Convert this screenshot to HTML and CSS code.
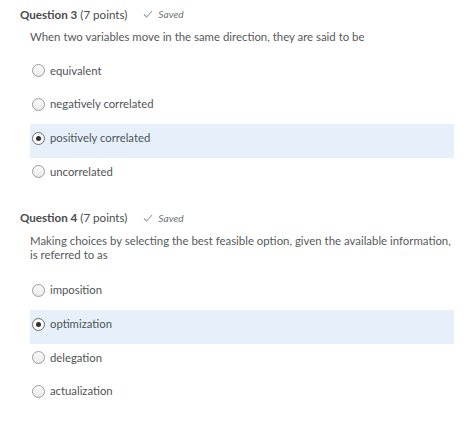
FILE: index.html
```html
<!DOCTYPE html>
<html>
<head>
<meta charset="utf-8">
<link rel="stylesheet" href="styles.css">
</head>
<body>
<div class="page">
  <section class="question q3">
    <div class="qhead">
      <span class="qtitle"><b>Question 3</b> (7 points)</span>
      <span class="saved"><svg class="check" width="10" height="8" viewBox="0 0 10 8"><polyline points="1,4.5 3.6,7 9,1" fill="none" stroke="#9a9ea1" stroke-width="1.1"/></svg><i>Saved</i></span>
    </div>
    <p class="qtext">When two variables move in the same direction, they are said to be</p>
    <ul class="options">
      <li class="opt"><span class="radio"></span><span class="label">equivalent</span></li>
      <li class="opt"><span class="radio"></span><span class="label">negatively correlated</span></li>
      <li class="opt selected"><span class="radio checked"></span><span class="label">positively correlated</span></li>
      <li class="opt"><span class="radio"></span><span class="label">uncorrelated</span></li>
    </ul>
  </section>
  <section class="question q4">
    <div class="qhead">
      <span class="qtitle"><b>Question 4</b> (7 points)</span>
      <span class="saved"><svg class="check" width="10" height="8" viewBox="0 0 10 8"><polyline points="1,4.5 3.6,7 9,1" fill="none" stroke="#9a9ea1" stroke-width="1.1"/></svg><i>Saved</i></span>
    </div>
    <p class="qtext">Making choices by selecting the best feasible option, given the available information, is referred to as</p>
    <ul class="options">
      <li class="opt"><span class="radio"></span><span class="label">imposition</span></li>
      <li class="opt selected"><span class="radio checked"></span><span class="label">optimization</span></li>
      <li class="opt"><span class="radio"></span><span class="label">delegation</span></li>
      <li class="opt"><span class="radio"></span><span class="label">actualization</span></li>
    </ul>
  </section>
</div>
</body>
</html>
```
FILE: styles.css
```css
* { box-sizing: border-box; }
html, body { margin: 0; padding: 0; background: #fff; }
body { font-family: Lato, "Open Sans", sans-serif; color: #494c4e; }
.page { padding: 5px 20px 0 20px; display: flex; flex-direction: column; }
.question { display: flex; flex-direction: column; }
.q4 { margin-top: 17px; }
.qhead { display: flex; align-items: center; height: 18px; }
.qtitle { font-size: 11.6px; color: #494c4e; }
.qtitle b { font-weight: 700; }
.saved { display: flex; align-items: center; margin-left: 16px; font-size: 10.2px; color: #6e7376; gap: 5px; }
.saved i { font-style: italic; }
.check { display: block; }
.qtext { margin: 7px 0 0 10px; font-size: 11.4px; line-height: 14px; color: #565a5c; }
.options { list-style: none; margin: 13px 0 0 10px; padding: 0; display: flex; flex-direction: column; }
.q4 .options { margin-top: 15px; }
.opt { height: 33.67px; display: flex; align-items: center; padding: 0 0 6px 2px; gap: 5px; font-size: 11.3px; color: #505457; }
.opt.selected { background: #e6f0fb; }
.radio { width: 13px; height: 13px; border-radius: 50%; border: 1px solid #9c9c9c; background: linear-gradient(#fbfbfb, #eaeaea); display: flex; align-items: center; justify-content: center; flex: none; }
.radio.checked { border-color: #6b6b6b; background: #fff; }
.radio.checked::after { content: ""; width: 5px; height: 5px; border-radius: 50%; background: #2f2f2f; }
.label { line-height: 14px; }
```
